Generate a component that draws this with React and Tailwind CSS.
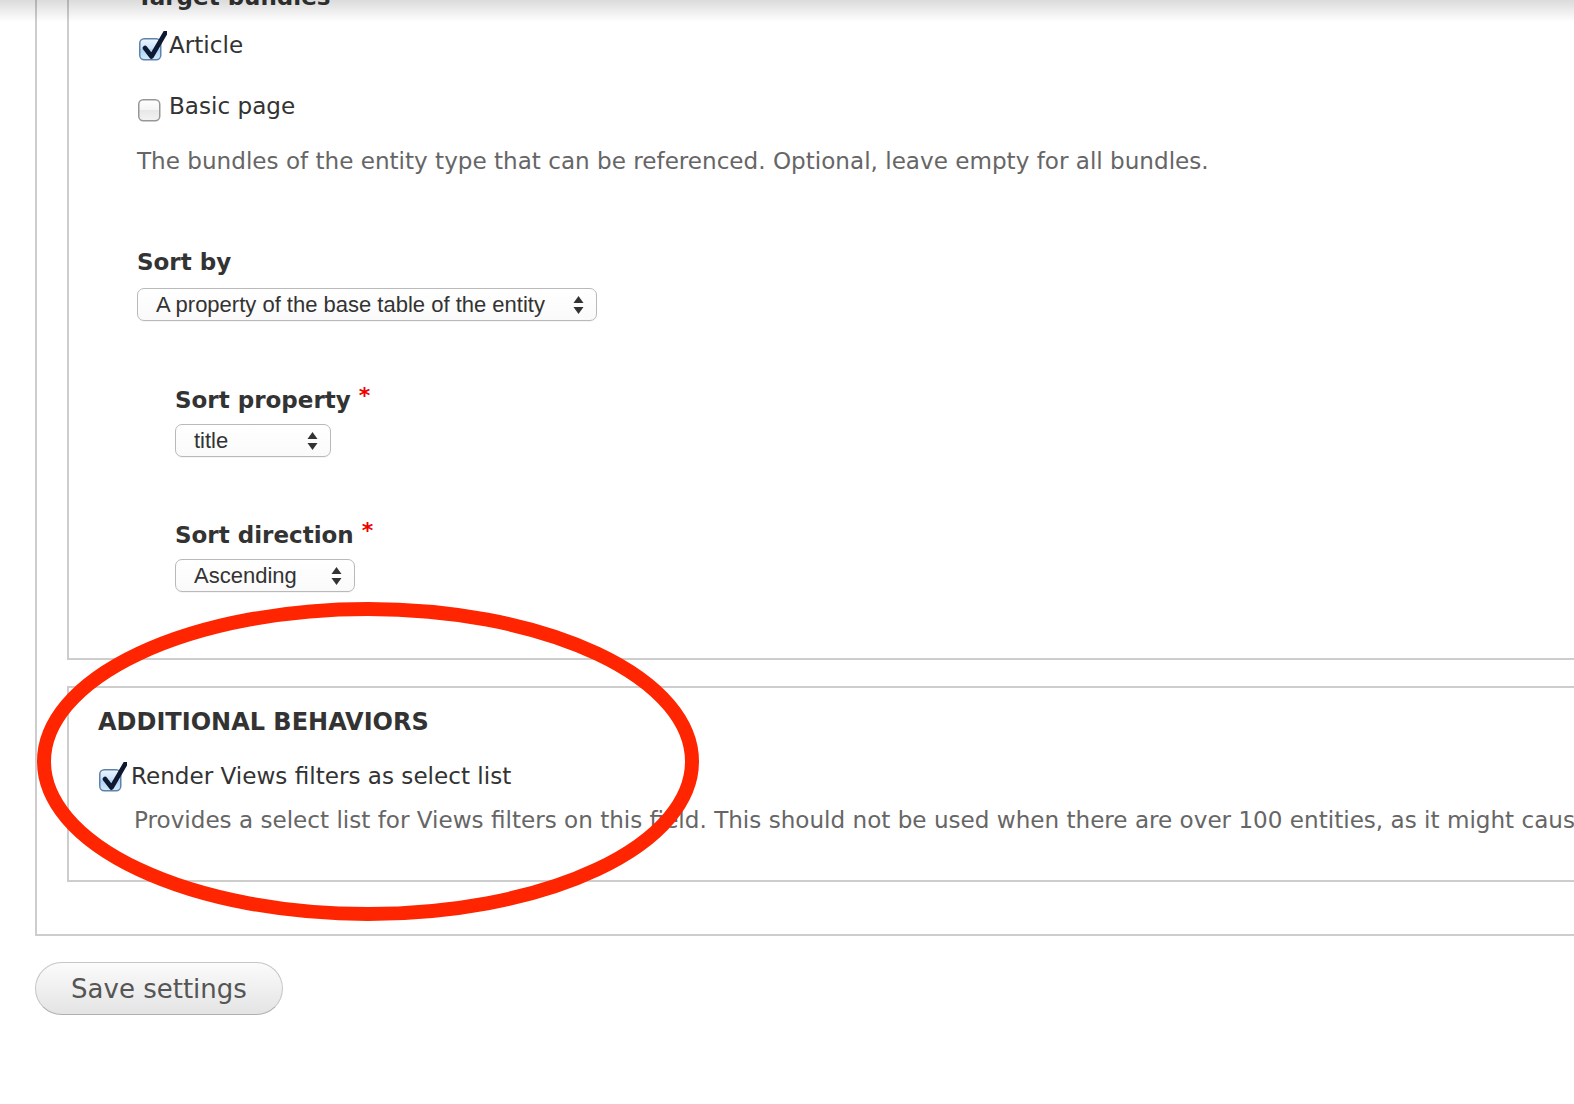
import React from "react";

const CheckBox = ({ checked }) => {
  return (
    <svg width="28" height="30" viewBox="0 0 28 30" className="shrink-0">
      <defs>
        <linearGradient id={checked ? "cbOn" : "cbOff"} x1="0" y1="0" x2="0" y2="1">
          {checked ? (
            <>
              <stop offset="0" stopColor="#eef6fe" />
              <stop offset="0.5" stopColor="#c6e0fa" />
              <stop offset="0.51" stopColor="#acd2f7" />
              <stop offset="1" stopColor="#d6ebfc" />
            </>
          ) : (
            <>
              <stop offset="0" stopColor="#ffffff" />
              <stop offset="0.5" stopColor="#f4f4f4" />
              <stop offset="0.51" stopColor="#e8e8e8" />
              <stop offset="1" stopColor="#f3f3f3" />
            </>
          )}
        </linearGradient>
      </defs>
      <rect
        x="0.75"
        y="7.75"
        width="21"
        height="21"
        rx="4.5"
        fill={`url(#${checked ? "cbOn" : "cbOff"})`}
        stroke={checked ? "#5f82ab" : "#979797"}
        strokeWidth="1.5"
      />
      {checked && (
        <path
          d="M6 17 L12.5 25.5 L26.5 1.5"
          fill="none"
          stroke="#0e1830"
          strokeWidth="4.6"
          strokeLinecap="round"
          strokeLinejoin="round"
        />
      )}
    </svg>
  );
};

const SelectBox = ({ value, width }) => {
  return (
    <div
      className={`${width} h-[33px] flex items-center justify-between pl-[18px] pr-[12px] rounded-[7px] border-[1.5px] border-[#b9b9b9] bg-linear-to-b from-white to-[#fafafa] shadow-[0_1px_0_rgba(0,0,0,0.04)] font-['Liberation_Sans',Arial,sans-serif] text-[22px] leading-[28px] text-[#333]`}
    >
      <span>{value}</span>
      <svg width="11" height="20" viewBox="0 0 11 20">
        <path d="M5.5 1 L10.5 8 H0.5 Z" fill="#333" />
        <path d="M5.5 19 L10.5 12 H0.5 Z" fill="#333" />
      </svg>
    </div>
  );
};

const Req = () => <span className="ml-[8px] text-[#e00] text-[22px] align-top relative top-[-4px]">*</span>;

export default function App() {
  return (
    <div className="relative h-[1104px] w-full overflow-hidden bg-white font-['DejaVu_Sans',sans-serif] text-[#333]">
      <div className="w-[1800px] pl-[35px] -mt-[17px]">
        <div className="border-l-2 border-b-2 border-[#cdcdcd] pl-[30px] pb-[52px]">
          {/* entity reference settings */}
          <div className="border-l-2 border-b-2 border-[#cdcdcd] pl-[68px] pb-[66px]">
            <h3 className="text-[23px] leading-[28px] font-bold">Target bundles</h3>

            <div className="mt-[20px] h-[28px] flex items-start">
              <div className="ml-[2px]">
                <CheckBox checked />
              </div>
              <span className="ml-[2px] text-[23.1px] leading-[28px]">Article</span>
            </div>

            <div className="mt-[33px] h-[28px] flex items-start">
              <div className="ml-[1px]">
                <CheckBox />
              </div>
              <span className="ml-[3px] text-[23.1px] leading-[28px]">Basic page</span>
            </div>

            <p className="mt-[27px] text-[23.1px] leading-[28px] text-[#666]">
              The bundles of the entity type that can be referenced. Optional, leave empty for all bundles.
            </p>

            <h3 className="mt-[73px] text-[23px] leading-[28px] font-bold">Sort by</h3>
            <div className="mt-[12px]">
              <SelectBox value="A property of the base table of the entity" width="w-[460px]" />
            </div>

            <div className="pl-[38px]">
              <h3 className="mt-[65px] text-[23px] leading-[28px] font-bold">
                Sort property<Req />
              </h3>
              <div className="mt-[10px]">
                <SelectBox value="title" width="w-[156px]" />
              </div>

              <h3 className="mt-[64px] text-[23px] leading-[28px] font-bold">
                Sort direction<Req />
              </h3>
              <div className="mt-[10px]">
                <SelectBox value="Ascending" width="w-[180px]" />
              </div>
            </div>
          </div>

          {/* additional behaviors */}
          <div className="mt-[26px] border-2 border-[#cdcdcd] pl-[29px] pt-[20px] pb-[46px]">
            <h2 className="text-[24px] leading-[28px] font-bold uppercase">Additional behaviors</h2>
            <div className="mt-[26px] h-[28px] flex items-start">
              <div className="ml-[1px]">
                <CheckBox checked />
              </div>
              <span className="ml-[4px] text-[23.1px] leading-[28px]">Render Views filters as select list</span>
            </div>
            <p className="mt-[16px] ml-[36px] text-[23.1px] leading-[28px] text-[#666] whitespace-nowrap">
              Provides a select list for Views filters on this field. This should not be used when there are over 100 entities, as it might cause performance issues.
            </p>
          </div>
        </div>

        <button className="mt-[26px] w-[248px] h-[53px] rounded-full border-[1.5px] border-[#c6c6c6] border-b-[#b0b0b0] bg-linear-to-b from-[#fbfbfb] to-[#e4e4e4] text-[26px] leading-[30px] text-[#555] font-['DejaVu_Sans',sans-serif]">
          Save settings
        </button>
      </div>

      {/* annotation */}
      <svg className="absolute left-0 top-0 pointer-events-none" width="1574" height="1104">
        <ellipse cx="368" cy="761.5" rx="324" ry="152.5" fill="none" stroke="#ff2500" strokeWidth="14" />
      </svg>

      {/* header shadow */}
      <div className="absolute inset-x-0 top-0 h-[22px] bg-linear-to-b from-[#00000024] to-transparent pointer-events-none" />
    </div>
  );
}
